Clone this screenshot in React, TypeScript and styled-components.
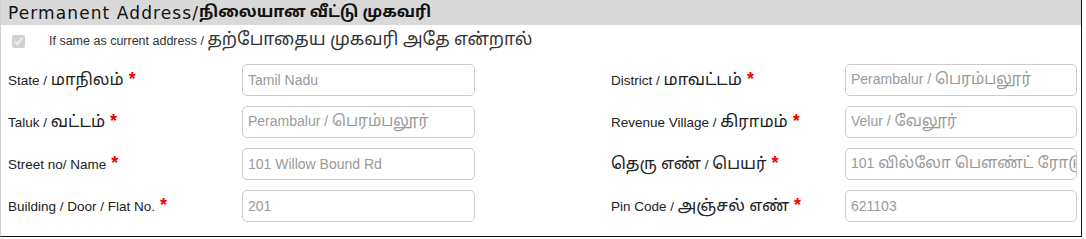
import styled, { createGlobalStyle } from 'styled-components';

const GlobalStyle = createGlobalStyle`
    html, body {
        margin: 0;
        padding: 0;
        background: #ffffff;
    }
    body {
        font-family: 'Liberation Sans', Arial, sans-serif;
        font-size: 13.5px;
        color: #333333;
    }
`;

const Panel = styled.section`
    width: 1082px;
    box-sizing: border-box;
    border-left: 1px solid #cfcfcf;
    border-right: 1px solid #111111;
    border-bottom: 1px solid #111111;
    padding-bottom: 14px;
`;

const Header = styled.h3`
    margin: 0;
    height: 25px;
    display: flex;
    align-items: center;
    padding-left: 7px;
    background: #d9d9d9;
    font-family: 'DejaVu Sans', Verdana, sans-serif;
    font-size: 17px;
    letter-spacing: 1.1px;
    font-weight: normal;
    color: #111111;
    white-space: nowrap;
    line-height: 20px;
`;

const Ta = styled.span<{ $size?: number; $bold?: boolean }>`
    font-family: 'Noto Sans Tamil', 'Lohit Tamil', 'Liberation Sans', sans-serif;
    font-size: ${({ $size }) => $size ?? 17}px;
    font-weight: ${({ $bold }) => ($bold ? 'bold' : 'normal')};
    letter-spacing: 0;
`;

const CheckRow = styled.label`
    display: flex;
    align-items: center;
    height: 32px;
    padding-left: 11px;
    gap: 24px;
    font-size: 12.5px;
    color: #333333;
    white-space: nowrap;
    line-height: 18px;
`;

const Check = styled.input`
    margin: 0;
    width: 13px;
    height: 13px;
`;

const Fields = styled.div`
    display: grid;
    grid-template-columns: 234px 233px 136px 234px 232px;
    row-gap: 10px;
    padding: 7px 0 0 7px;
    align-items: center;
`;

const Label = styled.span`
    display: flex;
    align-items: baseline;
    gap: 5px;
    color: #222222;
    white-space: nowrap;
    line-height: 18px;
`;

const Star = styled.span`
    color: #ee0000;
    font-size: 18px;
    font-weight: bold;
`;

const FieldBox = styled.div`
    box-sizing: border-box;
    height: 32px;
    display: flex;
    align-items: center;
    border: 1px solid #cccccc;
    border-radius: 5px;
    padding: 0 5px;
    font-size: 14px;
    line-height: 18px;
    color: #9a9a9a;
    background: #ffffff;
    white-space: nowrap;
    overflow: hidden;
`;

const Spacer = styled.span``;

// split text so the Tamil runs can get their own font size
function Mixed({ text, size }: { text: string; size?: number }) {
    const parts = text.split(/([\u0B80-\u0BFF][\u0B80-\u0BFF\s]*[\u0B80-\u0BFF]|[\u0B80-\u0BFF])/);
    return (
        <span>
            {parts.map((p, i) =>
                /[\u0B80-\u0BFF]/.test(p) ? (
                    <Ta key={i} $size={size}>
                        {p}
                    </Ta>
                ) : (
                    <span key={i}>{p}</span>
                ),
            )}
        </span>
    );
}

interface Item {
    label: string;
    value: string;
}

const rows: [Item, Item][] = [
    [
        { label: 'State / மாநிலம்', value: 'Tamil Nadu' },
        { label: 'District / மாவட்டம்', value: 'Perambalur / பெரம்பலூர்' },
    ],
    [
        { label: 'Taluk / வட்டம்', value: 'Perambalur / பெரம்பலூர்' },
        { label: 'Revenue Village / கிராமம்', value: 'Velur / வேலூர்' },
    ],
    [
        { label: 'Street no/ Name', value: '101 Willow Bound Rd' },
        { label: 'தெரு எண் / பெயர்', value: '101 வில்லோ பௌண்ட் ரோடு' },
    ],
    [
        { label: 'Building / Door / Flat No.', value: '201' },
        { label: 'Pin Code / அஞ்சல் எண்', value: '621103' },
    ],
];

function Cell({ item }: { item: Item }) {
    return (
        <>
            <Label>
                <Mixed text={item.label} size={16.5} />
                <Star>*</Star>
            </Label>
            <FieldBox>
                <Mixed text={item.value} size={15.5} />
            </FieldBox>
        </>
    );
}

function Row({ left, right }: { left: Item; right: Item }) {
    return (
        <>
            <Cell item={left} />
            <Spacer />
            <Cell item={right} />
        </>
    );
}

export default function App() {
    return (
        <>
            <GlobalStyle />
            <Panel>
                <Header>
                    Permanent Address/
                    <Ta $size={16} $bold>
                        நிலையான வீட்டு முகவரி
                    </Ta>
                </Header>
                <CheckRow>
                    <Check type="checkbox" checked disabled readOnly />
                    <Mixed text="If same as current address / தற்போதைய முகவரி அதே என்றால்" size={17.5} />
                </CheckRow>
                <Fields>
                    {rows.map(([left, right]) => (
                        <Row key={left.label} left={left} right={right} />
                    ))}
                </Fields>
            </Panel>
        </>
    );
}
